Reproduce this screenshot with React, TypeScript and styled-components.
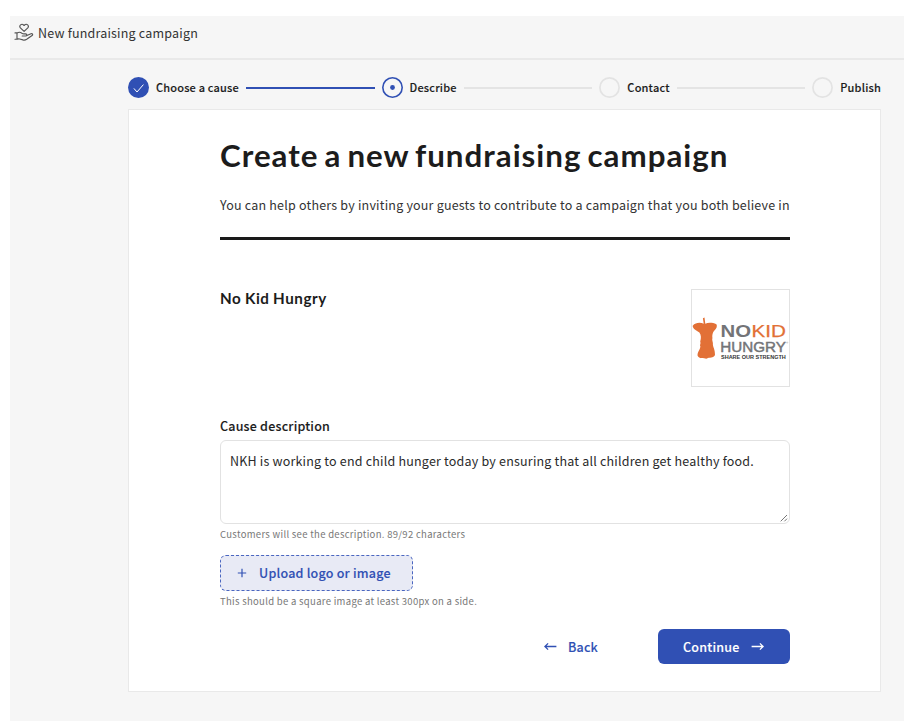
import React, { useState } from 'react';
import styled, { createGlobalStyle } from 'styled-components';

const sans = '"Noto Sans CJK SC", "Noto Sans", sans-serif';
const display = 'Lato, "Open Sans", sans-serif';
const blue = '#3050b4';

const GlobalStyle = createGlobalStyle`
  * { box-sizing: border-box; }
  body { margin: 0; background: #fff; font-family: ${sans}; color: #1c1c1c; overflow: hidden; }
  button, textarea { font-family: inherit; }
`;

const Page = styled.div`
  height: 705px;
  margin: 16px 0 1px 10px;
  background: #f6f6f6;
`;

const Header = styled.header`
  display: flex;
  align-items: flex-start;
  gap: 4px;
  height: 44px;
  padding: 7px 0 0 4px;
  border-bottom: 2px solid #e9e9e9;
`;

const HeaderTitle = styled.span`
  font-size: 12.5px;
  line-height: 20px;
  letter-spacing: 0.2px;
  color: #333;
`;

const Main = styled.main`
  width: 753px;
  margin-left: 118px;
`;

const Stepper = styled.ol`
  display: flex;
  align-items: center;
  gap: 7px;
  height: 49px;
  margin: 0;
  padding: 6px 0 0;
  list-style: none;
`;

const Step = styled.li`
  display: flex;
  align-items: center;
  gap: 7px;
`;

const Connector = styled.li<{ $done?: boolean }>`
  flex: 1;
  height: 2px;
  background: ${p => (p.$done ? blue : '#e4e4e4')};
`;

const StepLabel = styled.span`
  padding-bottom: 1px;
  font-size: 11px;
  font-weight: 500;
  line-height: 20px;
  letter-spacing: 0.18px;
  white-space: nowrap;
  -webkit-text-stroke: 0.12px currentColor;
`;

const Card = styled.section`
  height: 583px;
  padding: 25px 90px 0 91px;
  background: #fff;
  border: 1px solid #e9e9e9;
`;

const Title = styled.h1`
  margin: 0;
  font-family: ${display};
  font-size: 31.3px;
  font-weight: 700;
  line-height: 40px;
  letter-spacing: 1px;
  word-spacing: -2.6px;
  white-space: nowrap;
`;

const Lead = styled.p`
  margin: 20px 0 22px;
  font-size: 12.5px;
  line-height: 20px;
  letter-spacing: 0.2px;
  white-space: nowrap;
  color: #333;
`;

const Rule = styled.hr`
  height: 3px;
  margin: 0;
  border: 0;
  background: #1a1a1a;
`;

const CauseRow = styled.div`
  display: flex;
  justify-content: space-between;
  align-items: flex-start;
  margin-top: 49px;
`;

const CauseName = styled.h2`
  margin: 0;
  font-family: ${display};
  font-size: 15.2px;
  font-weight: 700;
  line-height: 19px;
  letter-spacing: 0.55px;
  word-spacing: -0.6px;
`;

const LogoFrame = styled.div`
  width: 99px;
  height: 98px;
  border: 1px solid #e2e2e2;
  svg { display: block; }
`;

const FieldLabel = styled.label`
  display: block;
  margin-top: 29px;
  font-size: 12.5px;
  font-weight: 500;
  line-height: 20px;
  letter-spacing: 0.2px;
  -webkit-text-stroke: 0.1px currentColor;
`;

const FieldBox = styled.div`
  position: relative;
  height: 84px;
  margin-top: 4px;
`;

const Area = styled.textarea`
  display: block;
  width: 100%;
  height: 100%;
  padding: 10px 9px;
  border: 1px solid #e2e2e2;
  border-radius: 6px;
  outline: none;
  resize: none;
  background: #fff;
  color: #2a2a2a;
  font-size: 12.5px;
  line-height: 20px;
  letter-spacing: 0.2px;
`;

const Grip = styled.svg`
  position: absolute;
  right: 2px;
  bottom: 2px;
`;

const Hint = styled.p`
  margin: 3px 0 0;
  font-size: 9.5px;
  line-height: 14px;
  letter-spacing: 0.31px;
  color: #777;
`;

const Button = styled.button`
  display: flex;
  align-items: center;
  height: 35px;
  border: 0;
  background: none;
  color: ${blue};
  font-size: 12.5px;
  font-weight: 500;
  line-height: 20px;
  letter-spacing: 0.22px;
  white-space: nowrap;
  -webkit-text-stroke: 0.12px currentColor;
`;

const UploadButton = styled(Button)`
  gap: 12px;
  width: 193px;
  height: 36px;
  margin-top: 14px;
  padding: 0 0 0 16px;
  background: #e8eaf5;
  border: 1px dashed #4a66c0;
  border-radius: 6px;
`;

const Actions = styled.div`
  display: flex;
  justify-content: flex-end;
  gap: 50px;
  margin-top: 21px;
`;

const BackButton = styled(Button)`
  gap: 11px;
  padding: 0 10px;
`;

const ContinueButton = styled(Button)`
  gap: 11px;
  width: 132px;
  padding: 0 0 0 25px;
  border-radius: 6px;
  background: ${blue};
  color: #fff;
`;

function HandHeart() {
  return (
    <svg width="20" height="20" viewBox="0 0 20 20" fill="none" stroke="#555" strokeWidth="1.15" strokeLinecap="round" strokeLinejoin="round">
      <path d="M10.1 8.4 6.4 4.8C4.6 2.6 7.6.1 9.6 2l.5.5.5-.5c2-1.9 5 .6 3.2 2.8z" />
      <path d="M1 9.9h2.2c1.3-.8 3.3-.7 4.7.4.6.4 1.2.6 1.9.6h1.8c1.7 0 1.7 2.1 0 2.1H8.2M12.9 12.5l4.1-1.7c1.3-.5 2.3.9 1.1 1.7l-5.4 3.8c-1.1.7-2.5.9-3.8.6l-3.2-.9c-.8-.2-1.8-.2-2.6.2H1M3 10v6" />
    </svg>
  );
}

function StepMark({ state }: { state: 'done' | 'current' | 'todo' }) {
  return (
    <svg width="21" height="21" viewBox="0 0 21 21" fill="none">
      {state === 'done' && (
        <>
          <circle cx="10.5" cy="10.5" r="10.5" fill={blue} />
          <path d="M5.9 11.4 9 15 15.4 7.6" stroke="#fff" strokeWidth="1" />
        </>
      )}
      {state === 'current' && (
        <>
          <circle cx="10.5" cy="10.5" r="9.7" stroke={blue} strokeWidth="1.6" />
          <circle cx="10.5" cy="10.5" r="2.4" fill={blue} />
        </>
      )}
      {state === 'todo' && <circle cx="10.5" cy="10.5" r="9.6" stroke="#e3e3e3" strokeWidth="1.7" />}
    </svg>
  );
}

function Arrow({ back }: { back?: boolean }) {
  return (
    <svg width="13" height="9" viewBox="0 0 13 9" fill="none" stroke="currentColor" strokeWidth="1.3">
      <path d={back ? 'M12.4 4.5H1.2M4.1 1.4.9 4.5l3.2 3.1' : 'M.6 4.5h11.2M8.9 1.4l3.2 3.1-3.2 3.1'} />
    </svg>
  );
}

function Plus() {
  return (
    <svg width="10" height="10" viewBox="0 0 10 10" stroke="currentColor" strokeWidth="1.2">
      <path d="M5 .8v8.4M.8 5h8.4" />
    </svg>
  );
}

function NoKidHungryLogo() {
  return (
    <svg width="97" height="96" viewBox="0 0 97 96" fontFamily='"Liberation Sans", sans-serif'>
      <path
        fill="#e27036"
        d="M10.9 28.2 12.5 27.6 13.3 33.8C16 32.2 20.6 32.4 24.4 34.2 25.6 36.2 24.4 38.6 22.4 40.4 20.6 42.3 20 45 20.4 48 19.6 50.2 21.4 52.4 20.9 54.8 21.4 58 23 59.8 23 65 21.6 68.6 17.4 66.8 14.3 68.8 11.8 67.6 7 69.4 5.6 65.8 5.2 62.3 7.7 60.6 8.4 56.6 7.2 55.1 9.3 53.6 8.2 51.6 9.3 48 9.2 44.8 7.4 42.4 4.4 40.6.6 38.8.7 35.8 3.5 32.4 8.4 32.2 11.7 33.8z"
      />
      <text x="28.5" y="47.3" fontSize="17" fontWeight="700" fill="#737477" textLength="30.5" lengthAdjust="spacingAndGlyphs">NO</text>
      <text x="59.6" y="47.3" fontSize="17" fill="#e27036" stroke="#e27036" strokeWidth=".25" textLength="34.4" lengthAdjust="spacingAndGlyphs">KID</text>
      <text x="28.3" y="62.4" fontSize="13.9" fill="#737477" stroke="#737477" strokeWidth=".45" textLength="65.5" lengthAdjust="spacingAndGlyphs">HUNGRY</text>
      <text x="29" y="68.9" fontSize="4.5" fontWeight="700" fill="#333" textLength="64.8" lengthAdjust="spacingAndGlyphs">SHARE OUR STRENGTH</text>
      <circle cx="95.2" cy="52.6" r=".6" fill="none" stroke="#999" strokeWidth=".4" />
    </svg>
  );
}

export default function App() {
  const [text, setText] = useState(
    'NKH is working to end child hunger today by ensuring that all children get healthy food.',
  );
  return (
    <>
      <GlobalStyle />
      <Page>
        <Header>
          <HandHeart />
          <HeaderTitle>New fundraising campaign</HeaderTitle>
        </Header>
        <Main>
          <Stepper>
            <Step><StepMark state="done" /><StepLabel>Choose a cause</StepLabel></Step>
            <Connector $done />
            <Step><StepMark state="current" /><StepLabel>Describe</StepLabel></Step>
            <Connector />
            <Step><StepMark state="todo" /><StepLabel>Contact</StepLabel></Step>
            <Connector />
            <Step><StepMark state="todo" /><StepLabel>Publish</StepLabel></Step>
          </Stepper>
          <Card>
            <Title>Create a new fundraising campaign</Title>
            <Lead>You can help others by inviting your guests to contribute to a campaign that you both believe in</Lead>
            <Rule />
            <CauseRow>
              <CauseName>No Kid Hungry</CauseName>
              <LogoFrame><NoKidHungryLogo /></LogoFrame>
            </CauseRow>
            <FieldLabel htmlFor="description">Cause description</FieldLabel>
            <FieldBox>
              <Area id="description" spellCheck={false} value={text} onChange={e => setText(e.target.value)} />
              <Grip width="8" height="8" viewBox="0 0 8 8" stroke="#666" strokeWidth=".9">
                <path d="M.7 7.3 7 1M4.4 7.3 7 4.7" />
              </Grip>
            </FieldBox>
            <Hint>Customers will see the description. 89/92 characters</Hint>
            <UploadButton type="button"><Plus />Upload logo or image</UploadButton>
            <Hint>This should be a square image at least 300px on a side.</Hint>
            <Actions>
              <BackButton type="button"><Arrow back />Back</BackButton>
              <ContinueButton type="button">Continue<Arrow /></ContinueButton>
            </Actions>
          </Card>
        </Main>
      </Page>
    </>
  );
}
